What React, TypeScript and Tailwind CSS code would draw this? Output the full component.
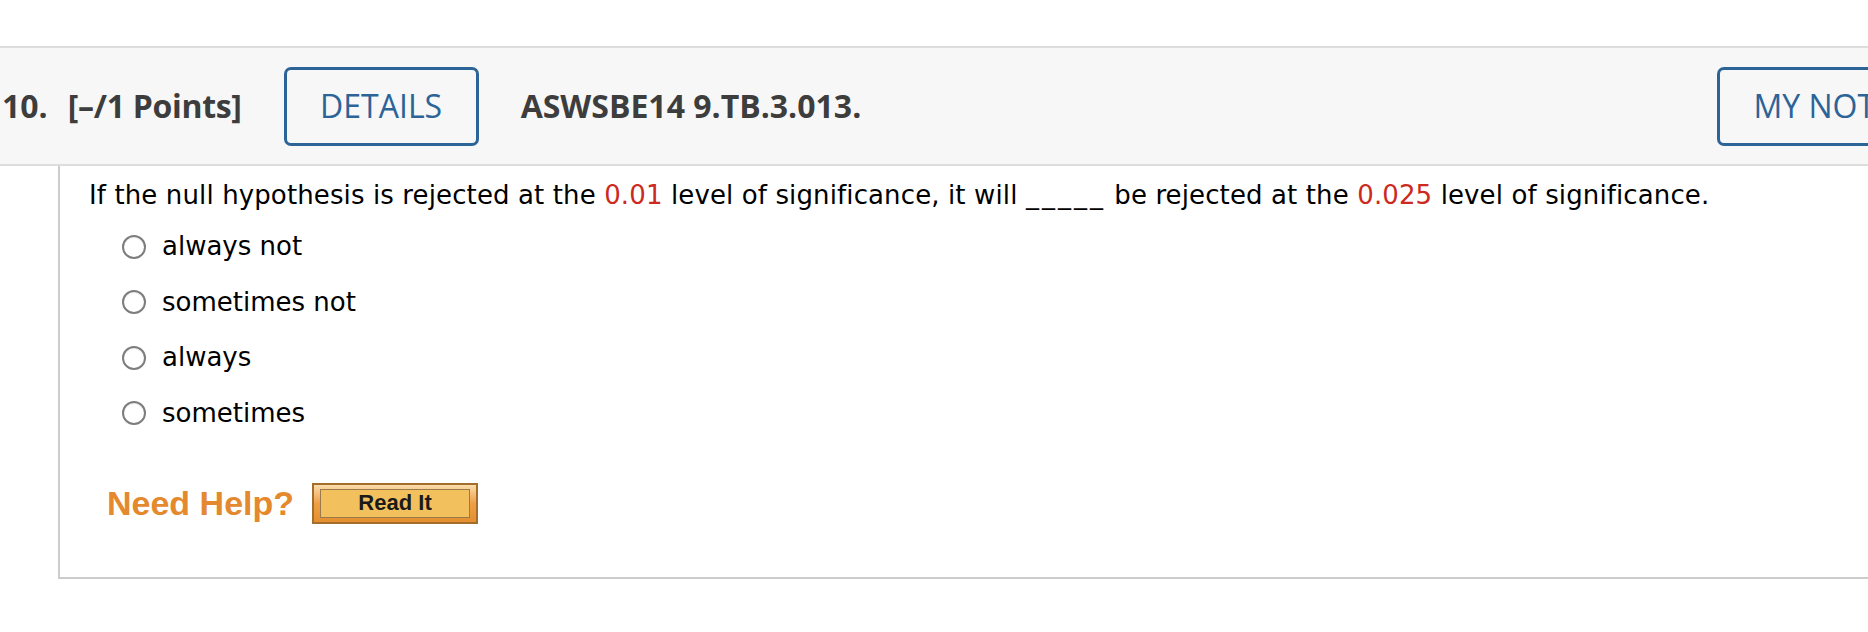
import React from 'react';

const options = ['always not', 'sometimes not', 'always', 'sometimes'];

const Radio: React.FC = () => (
    <span className="w-[24px] h-[24px] rounded-full border-2 border-[#7d7d7d] bg-white shrink-0 shadow-[inset_0_1px_1px_rgba(0,0,0,0.08)]" />
);

const App: React.FC = () => {
    return (
        <div className="w-[1868px] h-[632px] bg-white overflow-hidden pt-[46px]">
            {/* Question header */}
            <div className="h-[120px] border-y-2 border-[#dddddd] bg-[#f7f7f7] flex items-center overflow-hidden font-['Open_Sans',sans-serif] text-[32px] leading-none">
                <div className="w-[1717px] shrink-0 flex items-center pl-[2px]">
                    <span className="font-bold text-[#3d3d3d]">10.</span>
                    <span className="ml-[20px] font-bold text-[#3d3d3d] tracking-[-0.3px]">[–/1 Points]</span>
                    <button className="ml-[42px] w-[195px] h-[79px] border-[3px] border-[#2d6497] rounded-[7px] flex items-center justify-center font-medium text-[#2d6497]">
                        DETAILS
                    </button>
                    <span className="ml-[42px] font-bold text-[#3d3d3d]">ASWSBE14 9.TB.3.013.</span>
                </div>
                <button className="shrink-0 w-[230px] h-[79px] border-[3px] border-[#2d6497] rounded-[7px] flex items-center justify-center font-medium text-[#2d6497]">
                    MY NOTES
                </button>
            </div>

            {/* Question body */}
            <div className="ml-[58px] w-[1810px] h-[413px] border-l-2 border-b-2 border-[#cccccc] pl-[29px] pt-[10px] font-['Verdana','DejaVu_Sans',sans-serif] text-[26px] text-black">
                <p className="leading-[39px] whitespace-nowrap tracking-[0.12px]">
                    If the null hypothesis is rejected at the <span className="text-[#cc2a20]">0.01</span> level of significance, it will{' '}
                    <span className="tracking-[3px]">_____</span> be rejected at the <span className="text-[#cc2a20]">0.025</span> level of significance.
                </p>

                <div className="mt-[4px]">
                    {options.map((opt) => (
                        <label key={opt} className="h-[55.5px] flex items-center pl-[33px]">
                            <Radio />
                            <span className="ml-[16px] leading-[55.5px]">{opt}</span>
                        </label>
                    ))}
                </div>

                <div className="mt-[41.5px] h-[41px] flex items-center pl-[18px]">
                    <span className="font-['Liberation_Sans',Arial,sans-serif] font-bold text-[34px] leading-none text-[#e5892e]">
                        Need Help?
                    </span>
                    <button className="ml-[18px] w-[166px] h-[41px] border-2 border-[#a36d2c] bg-gradient-to-b from-[#f9dcaa] via-[#ee9f42] to-[#e48f30] px-[6px] py-[4px]">
                        <span className="w-full h-full border-[1.5px] border-[#9a7a4c] bg-[#f3c05e] flex items-center justify-center font-['Liberation_Sans',Arial,sans-serif] font-bold text-[22px] leading-none text-[#1a1a1a]">
                            Read It
                        </span>
                    </button>
                </div>
            </div>
        </div>
    );
};

export default App;
